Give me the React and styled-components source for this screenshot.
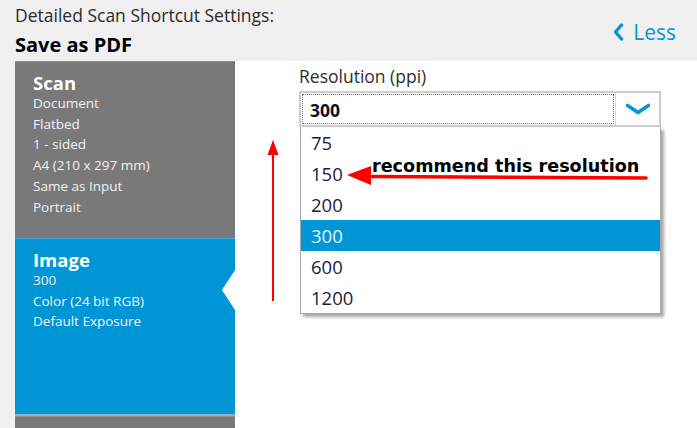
import React from "react";
import styled, { createGlobalStyle } from "styled-components";

const GlobalStyle = createGlobalStyle`
  body {
    margin: 0;
    background: #ffffff;
    font-family: "Open Sans", "Noto Sans", sans-serif;
  }
`;

const scanLines = [
  "Document",
  "Flatbed",
  "1 - sided",
  "A4 (210 x 297 mm)",
  "Same as Input",
  "Portrait",
];

const imageLines = ["300", "Color (24 bit RGB)", "Default Exposure"];

const resolutions = ["75", "150", "200", "300", "600", "1200"];

const App = () => {
  const selected = "300";

  return (
    <Page>
      <GlobalStyle />
      <Header>
        <Titles>
          <Subtitle>Detailed Scan Shortcut Settings:</Subtitle>
          <Title>Save as PDF</Title>
        </Titles>
        <LessLink>
          <svg width="11" height="18" viewBox="0 0 11 18">
            <path
              d="M8.5 2 L2.5 9 L8.5 16"
              fill="none"
              stroke="#0096d6"
              strokeWidth="3.4"
              strokeLinecap="round"
              strokeLinejoin="round"
            />
          </svg>
          Less
        </LessLink>
      </Header>

      <Body>
        <Sidebar>
          <Section>
            <SectionTitle>Scan</SectionTitle>
            {scanLines.map((line) => (
              <SectionLine key={line}>{line}</SectionLine>
            ))}
          </Section>
          <Section active>
            <SectionTitle>Image</SectionTitle>
            {imageLines.map((line) => (
              <SectionLine key={line}>{line}</SectionLine>
            ))}
            <Notch />
          </Section>
          <Section />
        </Sidebar>

        <Main>
          <Label>Resolution (ppi)</Label>
          <SelectWrap>
            <Select>
              <Value>{selected}</Value>
              <ArrowButton>
                <svg width="26" height="12" viewBox="0 0 26 12">
                  <path
                    d="M2.5 2.5 L13 9.5 L23.5 2.5"
                    fill="none"
                    stroke="#0096d6"
                    strokeWidth="3.6"
                    strokeLinecap="round"
                    strokeLinejoin="round"
                  />
                </svg>
              </ArrowButton>
            </Select>
            <List>
              {resolutions.map((r) => (
                <Item key={r} selected={r === selected}>
                  {r}
                </Item>
              ))}
            </List>
          </SelectWrap>
        </Main>
      </Body>

      {/* red annotation drawn over the screenshot */}
      <UpArrow width="16" height="162" viewBox="0 0 16 162">
        <line x1="8" y1="12" x2="8" y2="161" stroke="#ff0000" strokeWidth="2" />
        <polygon points="8,0 2.5,15 13.5,15" fill="#ff0000" />
      </UpArrow>
      <LeftArrow width="304" height="24" viewBox="0 0 304 24">
        <path
          d="M22 12.5 L300 14"
          stroke="#ff0000"
          strokeWidth="3.6"
          strokeLinecap="round"
        />
        <polygon points="1,11 25,2 25,21" fill="#ff0000" />
      </LeftArrow>
      <Note>recommend this resolution</Note>
    </Page>
  );
};

const Page = styled.div`
  position: relative;
  width: 697px;
  height: 428px;
  overflow: hidden;
  background: #f0f0f0;
`;

const Header = styled.div`
  height: 61px;
  box-sizing: border-box;
  padding: 2px 21px 0 15px;
  display: flex;
  justify-content: space-between;
  align-items: flex-start;
`;

const Titles = styled.div`
  display: flex;
  flex-direction: column;
`;

const Subtitle = styled.div`
  font-size: 17.5px;
  line-height: 26px;
  color: #2b2b2b;
`;

const Title = styled.div`
  margin-top: 2px;
  font-size: 20px;
  line-height: 30px;
  font-weight: 700;
  color: #000000;
`;

const LessLink = styled.div`
  display: flex;
  align-items: center;
  gap: 9px;
  margin-top: 15px;
  font-size: 21px;
  line-height: 30px;
  color: #0096d6;
`;

const Body = styled.div`
  display: flex;
  height: 367px;
  padding-left: 15px;
`;

const Sidebar = styled.div`
  width: 220px;
  display: flex;
  flex-direction: column;
  flex-shrink: 0;
`;

const Section = styled.div`
  position: relative;
  height: ${(p) => (p.active ? "178px" : "177px")};
  flex-shrink: 0;
  box-sizing: border-box;
  padding: 8px 0 0 18px;
  background: ${(p) => (p.active ? "#0096d6" : "#797979")};
  border-top: 1px solid ${(p) => (p.active ? "#3aa9de" : "#8f8f8f")};
  border-bottom: ${(p) => (p.active ? "2px solid #8fb4c8" : "none")};
  color: #ffffff;
`;

const SectionTitle = styled.div`
  font-size: 18.5px;
  line-height: 26px;
  font-weight: 700;
  margin-bottom: -3px;
`;

const SectionLine = styled.div`
  font-size: 13.5px;
  line-height: 20.7px;
  color: #f2f2f2;
`;

const Notch = styled.div`
  position: absolute;
  right: 0;
  top: 31px;
  width: 13px;
  height: 40px;
  background: #ffffff;
  clip-path: polygon(100% 0, 0 50%, 100% 100%);
`;

const Main = styled.div`
  flex: 1;
  background: #ffffff;
  padding: 3px 0 0 64px;
`;

const Label = styled.div`
  font-size: 17.5px;
  line-height: 25px;
  color: #2e2e2e;
`;

const SelectWrap = styled.div`
  position: relative;
  width: 362px;
  margin-top: 2px;
`;

const Select = styled.div`
  display: flex;
  height: 36px;
  box-sizing: border-box;
  border: 2px solid #cdcdcd;
  background: #ffffff;
`;

const Value = styled.div`
  flex: 1;
  margin: 1px;
  border: 1px dotted #6e6e6e;
  padding-left: 7px;
  font-size: 17.5px;
  font-weight: 700;
  line-height: 30px;
  color: #111122;
`;

const ArrowButton = styled.div`
  width: 43px;
  display: flex;
  align-items: center;
  justify-content: center;
  border-left: 1px solid #d8d8d8;
`;

const List = styled.div`
  position: absolute;
  left: 1px;
  top: 36px;
  width: 361px;
  box-sizing: border-box;
  border: 1px solid #a8a8a8;
  border-top: none;
  background: #ffffff;
  box-shadow: 3px 3px 3px rgba(0, 0, 0, 0.35);
`;

const Item = styled.div`
  height: 31px;
  padding-left: 10px;
  font-size: 18.5px;
  line-height: 31px;
  color: ${(p) => (p.selected ? "#e6f3fb" : "#1c1c3c")};
  background: ${(p) => (p.selected ? "#0096d6" : "transparent")};
`;

const UpArrow = styled.svg`
  position: absolute;
  left: 265px;
  top: 140px;
`;

const LeftArrow = styled.svg`
  position: absolute;
  left: 346px;
  top: 164px;
`;

const Note = styled.div`
  position: absolute;
  left: 372px;
  top: 155px;
  font-family: "DejaVu Sans", sans-serif;
  font-size: 17.6px;
  font-weight: 700;
  line-height: 22px;
  color: #000000;
`;

export default App;
